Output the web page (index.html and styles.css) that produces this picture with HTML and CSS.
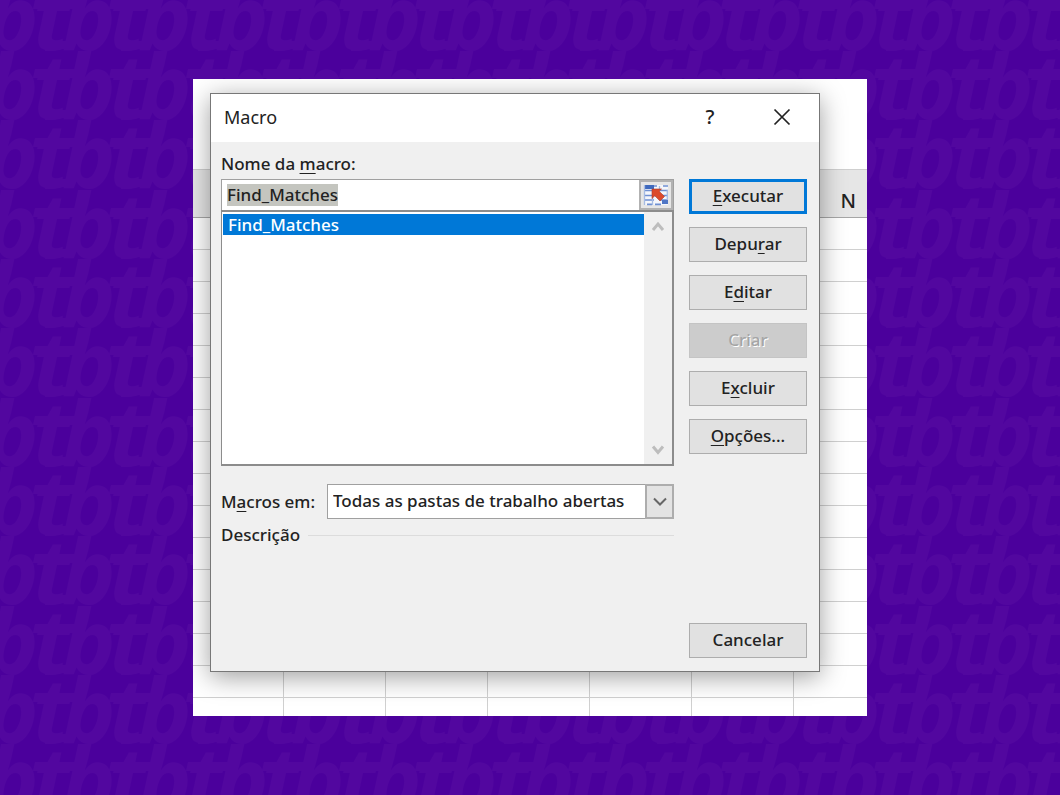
FILE: index.html
```html
<!DOCTYPE html>
<html lang="pt-BR">
<head>
<meta charset="utf-8">
<meta name="viewport" content="width=device-width, initial-scale=1">
<title>Macro</title>
<link rel="stylesheet" href="styles.css">
</head>
<body>
<svg class="backdrop" aria-hidden="true">
  <defs>
    <g id="mark" class="mark">
      <text x="0" y="0">t</text><text x="29" y="0">b</text>
      <path d="M2-50h42l-2 9H0zM14-9h26l-2 9q-8-2-14 0l-12 1z"/>
    </g>
    <pattern id="marks" width="153" height="208" patternUnits="userSpaceOnUse">
      <use href="#mark" x="-44" y="50"/><use href="#mark" x="33" y="50"/><use href="#mark" x="109" y="50"/>
      <use href="#mark" x="-44" y="119"/><use href="#mark" x="33" y="119"/><use href="#mark" x="109" y="119"/>
      <use href="#mark" x="-44" y="188"/><use href="#mark" x="33" y="188"/><use href="#mark" x="109" y="188"/>
      <use href="#mark" x="-44" y="258"/><use href="#mark" x="33" y="258"/><use href="#mark" x="109" y="258"/>
    </pattern>
  </defs>
  <rect width="100%" height="100%" fill="url(#marks)"/>
</svg>

<main class="stage">
  <div class="sheet">
    <div class="grid">
      <div class="grid-top"></div>
      <div class="grid-head"><span>N</span></div>
      <div class="grid-cells"></div>
    </div>

    <section class="dialog" role="dialog" aria-labelledby="title">
      <header class="titlebar">
        <h1 class="title" id="title">Macro</h1>
        <button class="title-btn" type="button" aria-label="Ajuda">?</button>
        <button class="title-btn" type="button" aria-label="Fechar">
          <svg width="18" height="18" viewBox="0 0 18 18"><path d="M1.500 1.500l15 15M16.500 1.500l-15 15" fill="none" stroke="#222" stroke-width="1.700"/></svg>
        </button>
      </header>

      <form class="body">
        <div class="fields">
          <label class="label" for="name">Nome da <u>m</u>acro:</label>
          <div class="name-row">
            <input class="name" id="name" type="text" value="Find_Matches" spellcheck="false" autocomplete="off">
            <button class="ref-btn" type="button" aria-label="Selecionar intervalo">
              <svg width="26" height="22" viewBox="0 0 26 22">
                <path fill="#f4f6fb" d="M1 1h24v20H1z"/>
                <path fill="#3f69bd" d="M1 1h10v4H1z"/>
                <path d="M11 2h3M20 2h5M1 6.500h24M1 11.500h24M1 16h10M17 16h8M4 20.300h5M12 20.300h6" stroke="#6f90d2" stroke-width="1.700"/>
                <path d="M1.500 1v20M9.500 14v7M16.500 2v5M24.300 6v13" stroke="#a6bbe3" stroke-width="1.300"/>
                <path fill="#4f76c5" d="M19 16h6v4h-6z"/>
                <path fill="#dc4a2b" stroke="#a93a2b" stroke-width=".6" d="M9 5h9.500l-2.300 2.300 5.300 5.200-4.500 4.500-5.200-5.200L9 14.500z"/>
              </svg>
            </button>
          </div>
          <div class="list">
            <ul class="options" role="listbox" aria-label="Macros">
              <li class="option" role="option" aria-selected="true">Find_Matches</li>
            </ul>
            <div class="scroll">
              <button class="scroll-btn" type="button" aria-label="Rolar para cima"><svg width="14" height="12" viewBox="0 0 14 12"><path d="M2 10l5-6 5 6" fill="none" stroke="#bdbdbd" stroke-width="3"/></svg></button>
              <button class="scroll-btn" type="button" aria-label="Rolar para baixo"><svg width="14" height="12" viewBox="0 0 14 12"><path d="M2 2.500l5 6 5-6" fill="none" stroke="#bdbdbd" stroke-width="3"/></svg></button>
            </div>
          </div>
          <div class="source">
            <label for="source">M<u>a</u>cros em:</label>
            <div class="combo">
              <select class="select" id="source"><option>Todas as pastas de trabalho abertas</option></select>
              <span class="arrow"><svg width="16" height="12" viewBox="0 0 16 12"><path d="M2 2.500l6 6 6-6" fill="none" stroke="#666" stroke-width="2"/></svg></span>
            </div>
          </div>
          <div class="description"><span>Descrição</span><hr class="rule"></div>
        </div>

        <div class="actions">
          <button class="btn btn-default" type="button"><span><u>E</u>xecutar</span></button>
          <button class="btn" type="button"><span>Depu<u>r</u>ar</span></button>
          <button class="btn" type="button"><span>E<u>d</u>itar</span></button>
          <button class="btn" type="button" disabled>Criar</button>
          <button class="btn" type="button"><span>E<u>x</u>cluir</span></button>
          <button class="btn" type="button"><span><u>O</u>pções...</span></button>
          <button class="btn btn-cancel" type="button">Cancelar</button>
        </div>
      </form>
    </section>
  </div>
</main>
<script src="script.js"></script>
</body>
</html>
```
FILE: styles.css
```css
* { box-sizing: border-box; }

body {
  margin: 0;
  background: #4b009c;
  color: #222;
  font: 500 17px/22px "Noto Sans", "Open Sans", sans-serif;
}

button, input, select { font: inherit; color: inherit; margin: 0; border-radius: 0; }
button { padding: 0; }
svg { display: block; }
u { text-underline-offset: 3px; text-decoration-skip-ink: none; }

.backdrop { position: fixed; inset: 0; width: 100%; height: 100%; }
.mark { font: italic 700 90px "Open Sans", sans-serif; fill: #52079f; }

.stage {
  position: relative;
  display: flex;
  align-items: center;
  justify-content: center;
  min-height: 100vh;
}

.sheet {
  display: grid;
  width: 100%;
  max-width: 674px;
  background: #fff;
  overflow: hidden;
}
.grid, .dialog { grid-area: 1 / 1; }

.grid { display: flex; flex-direction: column; }
.grid-top { height: 90px; }
.grid-head {
  display: flex;
  justify-content: flex-end;
  height: 49px;
  padding: 20px 11px 0;
  background: #e6e6e6;
  border-top: 1px solid #cfcfcf;
  border-bottom: 1px solid #a6a6a6;
  font-size: 20px;
}
.grid-cells {
  flex: 1;
  background:
    repeating-linear-gradient(to bottom, transparent 0 31px, #d0d0d0 31px 32px),
    repeating-linear-gradient(to right, transparent 0 101px, #d0d0d0 101px 102px) -11px 0 / 1020px 100%;
}

.dialog {
  margin: 14px 47px 44px 17px;
  background: #f0f0f0;
  border: 1px solid #777;
  box-shadow: 0 5px 24px rgba(0, 0, 0, .38);
}

.titlebar {
  display: flex;
  align-items: center;
  height: 48px;
  padding: 0 1px 2px 13px;
  background: #fff;
}
.title { flex: 1; margin: 0; font-size: 18px; font-weight: 400; }
.title-btn {
  display: grid;
  place-items: center;
  width: 72px;
  height: 46px;
  border: 0;
  background: none;
  font-size: 20px;
}

.body {
  display: grid;
  grid-template-columns: 1fr 118px;
  gap: 15px;
  padding: 0 12px 13px 10px;
}

.label { display: block; padding: 11px 0 4px; }
.name-row { display: flex; height: 31px; border: 1px solid #a0a0a0; border-bottom: 0; background: #fff; }
.name { flex: 1; min-width: 0; padding: 0 5px; border: 0; background: none; outline: 0; caret-color: transparent; }
.name::selection { background: #c4c5bf; color: #222; }
.ref-btn {
  display: grid;
  place-items: center;
  width: 34px;
  border: 2px solid #b2b2b2;
  background: #e6e6e6;
}

.list { display: flex; height: 256px; border: 2px solid #8c8c8c; border-left-width: 1px; background: #fff; }
.options { flex: 1; margin: 0; padding: 2px 0 0 1px; list-style: none; }
.option { padding: 0 5px; line-height: 21px; background: #0078d7; color: #fff; }
.scroll {
  display: flex;
  flex-direction: column;
  justify-content: space-between;
  width: 28px;
  background: #f0f0f0;
}
.scroll-btn { display: grid; place-items: center; width: 28px; height: 28px; border: 0; background: none; }

.source { display: flex; align-items: center; justify-content: space-between; padding-top: 18px; }
.combo { position: relative; width: 347px; }
.select {
  display: block;
  width: 100%;
  height: 35px;
  padding: 0 32px 2px 5px;
  border: 1px solid #a0a0a0;
  background: #fff;
  appearance: none;
}
.arrow {
  position: absolute;
  inset: 0 0 0 auto;
  display: grid;
  place-items: center;
  width: 29px;
  border: 2px solid #adadad;
  background: #e3e3e3;
  pointer-events: none;
}

.description { display: flex; align-items: center; gap: 8px; padding-top: 5px; }
.rule { flex: 1; margin: 0; border: 0; border-top: 1px solid #dcdcdc; }

.actions { display: flex; flex-direction: column; gap: 13px; padding-top: 37px; }
.btn { height: 35px; padding-bottom: 2px; border: 1px solid #adadad; background: #e1e1e1; }
.btn-default { border: 3px solid #0078d7; }
.btn:disabled { background: #ccc; border-color: #c4c4c4; color: #a5a5a5; text-shadow: 1px 1px #fff; }
.btn-cancel { margin-top: 156px; }
```
FILE: script.js
```js
document.getElementById("name").select();
```
